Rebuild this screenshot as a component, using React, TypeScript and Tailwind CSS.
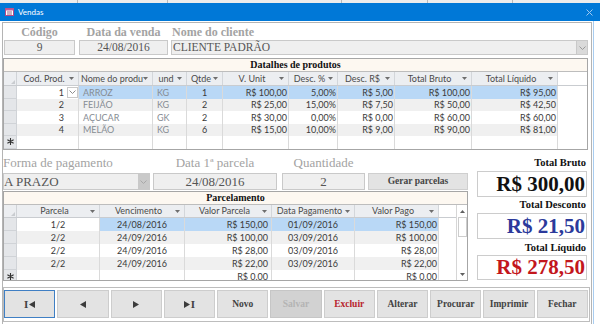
import React from "react";

const SERIF = "font-['Liberation_Serif','Times_New_Roman',serif]";
const SANS = "font-['Lato','Liberation_Sans',sans-serif]";

function HArrow() {
  return (
    <svg width="5" height="3" viewBox="0 0 5 3" className="shrink-0">
      <path d="M0 0H5L2.5 3Z" fill="#6e6e6e" />
    </svg>
  );
}

function Chevron({ color = "#8c8c8c" }: { color?: string }) {
  return (
    <svg width="7" height="4" viewBox="0 0 7 4">
      <path d="M0.5 0.5L3.5 3.5L6.5 0.5" fill="none" stroke={color} strokeWidth="1" />
    </svg>
  );
}

function Star() {
  return (
    <svg width="7" height="7" viewBox="0 0 7 7">
      <path d="M3.5 0V7M0.4 1.7L6.6 5.3M0.4 5.3L6.6 1.7" stroke="#333" strokeWidth="1.1" />
    </svg>
  );
}

function Tri({ dir }: { dir: "l" | "r" }) {
  return (
    <svg width="6" height="7" viewBox="0 0 6 7">
      {dir === "l" ? <path d="M6 0V7L0 3.5Z" fill="#3c3c3c" /> : <path d="M0 0V7L6 3.5Z" fill="#3c3c3c" />}
    </svg>
  );
}

type Col = { w: string; label: string; cls: string };

const cols1: Col[] = [
  { w: "w-[62px]", label: "Cod. Prod.", cls: "justify-end pr-[14px] text-[#3a3a3a]" },
  { w: "w-[74px]", label: "Nome do produ", cls: "justify-start pl-[4px] text-[#868c93]" },
  { w: "w-[34px]", label: "und", cls: "justify-start pl-[4px] text-[#868c93]" },
  { w: "w-[36px]", label: "Qtde", cls: "justify-center text-[#3a3a3a]" },
  { w: "w-[66px]", label: "V. Unit", cls: "justify-end pr-[1px] text-[#3a3a3a]" },
  { w: "w-[49px]", label: "Desc. %", cls: "justify-end pr-[1px] text-[#3a3a3a]" },
  { w: "w-[57px]", label: "Desc. R$", cls: "justify-end pr-[1px] text-[#3a3a3a]" },
  { w: "w-[77px]", label: "Total Bruto", cls: "justify-end pr-[1px] text-[#3a3a3a]" },
  { w: "w-[86px]", label: "Total Líquido", cls: "justify-end pr-[1px] text-[#3a3a3a]" },
];

const rows1 = [
  ["1", "ARROZ", "KG", "1", "R$ 100,00", "5,00%", "R$ 5,00", "R$ 100,00", "R$ 95,00"],
  ["2", "FEIJÃO", "KG", "2", "R$ 25,00", "15,00%", "R$ 7,50", "R$ 50,00", "R$ 42,50"],
  ["3", "AÇUCAR", "GK", "2", "R$ 30,00", "0,00%", "R$ 0,00", "R$ 60,00", "R$ 60,00"],
  ["4", "MELÃO", "KG", "6", "R$ 15,00", "10,00%", "R$ 9,00", "R$ 90,00", "R$ 81,00"],
];

const cols2: Col[] = [
  { w: "w-[83px]", label: "Parcela", cls: "justify-center text-[#3a3a3a]" },
  { w: "w-[85px]", label: "Vencimento", cls: "justify-center text-[#3a3a3a]" },
  { w: "w-[87px]", label: "Valor Parcela", cls: "justify-end pr-[3px] text-[#3a3a3a]" },
  { w: "w-[83px]", label: "Data Pagamento", cls: "justify-center text-[#3a3a3a]" },
  { w: "w-[84px]", label: "Valor Pago", cls: "justify-end pr-[1px] text-[#3a3a3a]" },
];

const rows2 = [
  ["1/2", "24/08/2016", "R$ 150,00", "01/09/2016", "R$ 150,00"],
  ["2/2", "24/09/2016", "R$ 100,00", "03/09/2016", "R$ 100,00"],
  ["2/2", "24/09/2016", "R$ 28,00", "03/09/2016", "R$ 28,00"],
  ["2/2", "24/09/2016", "R$ 22,00", "03/09/2016", "R$ 22,00"],
  ["", "", "R$ 0,00", "", "R$ 0,00"],
];

function Header({ cols, h }: { cols: Col[]; h: string }) {
  return (
    <div className={`${h} flex shrink-0 border-b border-[#c9ccd0] text-[9px] text-[#4a4a4a]`}>
      <div className="w-[13px] shrink-0 bg-[#eceef1] border-r border-[#d0d3d7] flex items-end justify-end p-[1px]">
        <svg width="4" height="4" viewBox="0 0 4 4">
          <path d="M4 0V4H0Z" fill="#c9ccd0" />
        </svg>
      </div>
      {cols.map((c, i) => (
        <div
          key={i}
          className={`${c.w} shrink-0 h-full bg-[#eceef1] border-r border-[#d3d6da] flex items-center pl-[2px] pr-[4px] overflow-hidden`}
        >
          <span className="flex-1 text-center whitespace-nowrap overflow-hidden">{c.label}</span>
          <HArrow />
        </div>
      ))}
      <div className="flex-1 bg-white" />
    </div>
  );
}

function Row({
  cols,
  vals,
  idx,
  h,
  isNew,
  first,
}: {
  cols: Col[];
  vals: string[];
  idx: number;
  h: string;
  isNew?: boolean;
  first?: React.ReactNode;
}) {
  const sel = idx === 0;
  const bg = isNew ? "bg-white" : sel ? "bg-[#b9d8f6]" : idx % 2 === 1 ? "bg-[#f0f0f0]" : "bg-white";
  return (
    <div className={`${h} flex shrink-0 text-[9px]`}>
      <div className="w-[13px] shrink-0 bg-[#e4e6e9] border-r border-b border-[#d0d3d7] flex items-center justify-center">
        {isNew && <Star />}
      </div>
      {cols.map((c, i) => {
        const cellBg = sel && i === 0 ? "bg-white" : bg;
        if (sel && i === 0 && first) {
          return (
            <div key={i} className={`${c.w} shrink-0 h-full ${cellBg} border-r border-[#dadada] flex items-center justify-end text-[#3a3a3a]`}>
              {first}
            </div>
          );
        }
        return (
          <div
            key={i}
            className={`${c.w} shrink-0 h-full ${cellBg} border-r border-[#dadada] flex items-center whitespace-nowrap overflow-hidden ${c.cls}`}
          >
            {vals[i]}
          </div>
        );
      })}
      <div className="flex-1 bg-white" />
    </div>
  );
}

function SubTitle({ text }: { text: string }) {
  return (
    <div className={`h-[13px] shrink-0 bg-[#fdf8f1] border-b border-[#bdbdbd] flex items-center justify-center ${SERIF} text-[10px] font-bold text-[#111] leading-[12px]`}>
      {text}
    </div>
  );
}

function Btn({ children, cls = "", text = "text-[#424242]" }: { children: React.ReactNode; cls?: string; text?: string }) {
  return (
    <div
      className={`flex-1 h-[28px] flex items-center justify-center border ${SERIF} text-[9.5px] font-bold ${text} ${cls}`}
    >
      {children}
    </div>
  );
}

export default function App() {
  return (
    <div className="w-[600px] h-[324px] overflow-hidden bg-white relative">
      {/* top strip */}
      <div className="h-[3px] bg-[#ececec] flex">
        <div className="w-[78px] border-r border-[#b8b8b8]" />
        <div className="w-[90px] border-r border-[#b8b8b8]" />
        <div className="w-[174px] border-r border-[#b8b8b8]" />
        <div className="w-[86px] border-r border-[#b8b8b8]" />
        <div className="w-[85px] border-r border-[#b8b8b8]" />
      </div>
      {/* title bar */}
      <div className="h-[18px] bg-[#0078d7] flex items-center pl-[5px] pr-[7px]">
        <svg width="9" height="8" viewBox="0 0 9 8">
          <rect x="0.5" y="0.5" width="8" height="7" fill="#fff" stroke="#b44a86" />
          <rect x="0.5" y="0.5" width="8" height="2" fill="#c85a96" />
          <path d="M2 4H7M2 6H7" stroke="#7a3b63" strokeWidth="0.8" />
        </svg>
        <span className={`ml-[4px] text-[8px] text-white ${SANS}`}>Vendas</span>
        <svg className="ml-auto" width="7" height="7" viewBox="0 0 7 7">
          <path d="M0.5 0.5L6.5 6.5M6.5 0.5L0.5 6.5" stroke="#9cc8f1" strokeWidth="1" />
        </svg>
      </div>
      {/* body */}
      <div className="h-[303px] flex">
        <div className="w-[2px]" />
        <div className="w-[590px] h-[302px] mt-[1px] border-l border-t border-r border-[#b4b4b4] flex flex-col">
          {/* labels row */}
          <div className={`mt-[2px] h-[15px] flex ${SERIF} text-[12px] font-bold text-[#a3a3a3] leading-[15px]`}>
            <div className="ml-[1px] w-[71px] text-center">Código</div>
            <div className="ml-[4px] w-[89px] text-center">Data da venda</div>
            <div className="ml-[3px] pl-[1px]">Nome do cliente</div>
          </div>
          {/* inputs row */}
          <div className={`h-[15px] flex ${SERIF} text-[11.5px] text-[#555] leading-[13px]`}>
            <div className="ml-[1px] w-[71px] border border-[#c9c9c9] bg-[#efefef] flex items-center justify-center">9</div>
            <div className="ml-[4px] w-[89px] border border-[#c9c9c9] bg-[#efefef] flex items-center justify-center">24/08/2016</div>
            <div className="ml-[3px] w-[417px] border border-[#c9c9c9] bg-[#efefef] flex items-center">
              <span className="pl-[1px] flex-1">CLIENTE PADRÃO</span>
              <div className="w-[11px] h-full bg-[#dadada] border-l border-[#c9c9c9] flex items-center justify-center">
                <Chevron color="#9a9a9a" />
              </div>
            </div>
          </div>
          {/* subform 1 */}
          <div className={`mt-[3px] h-[92px] w-[585px] border border-[#a6a6a6] flex flex-col overflow-hidden ${SANS}`}>
            <SubTitle text="Datalhes de produtos" />
            <Header cols={cols1} h="h-[14px]" />
            {rows1.map((r, i) => (
              <Row
                key={i}
                cols={cols1}
                vals={r}
                idx={i}
                h="h-[12.5px]"
                first={
                  <>
                    <span>1</span>
                    <span className="ml-[3px] w-[11px] h-[11px] border border-[#c9c9c9] bg-white flex items-center justify-center">
                      <Chevron />
                    </span>
                  </>
                }
              />
            ))}
            <Row cols={cols1} vals={["", "", "", "", "", "", "", "", ""]} idx={4} h="h-[12.5px]" isNew />
          </div>
          {/* section 2 */}
          <div className="flex">
            <div className="w-[465px] flex flex-col">
              <div className={`mt-[4px] h-[17px] flex ${SERIF} text-[13px] text-[#a3a3a3] leading-[17px] whitespace-nowrap`}>
                <div className="w-[147px]">Forma de pagamento</div>
                <div className="ml-[3px] w-[124px] text-center">Data 1ª parcela</div>
                <div className="ml-[5px] w-[83px] text-center">Quantidade</div>
              </div>
              <div className={`mt-[2px] h-[17px] flex ${SERIF} text-[13px] text-[#555] leading-[15px]`}>
                <div className="w-[147px] border border-[#c9c9c9] bg-[#efefef] flex items-center">
                  <span className="flex-1">A PRAZO</span>
                  <div className="w-[11px] h-full bg-[#c9c9c9] flex items-center justify-center">
                    <Chevron color="#a8a8a8" />
                  </div>
                </div>
                <div className="ml-[3px] w-[124px] border border-[#c9c9c9] bg-[#efefef] flex items-center justify-center">24/08/2016</div>
                <div className="ml-[5px] w-[83px] border border-[#c9c9c9] bg-[#efefef] flex items-center justify-center">2</div>
                <div className="ml-[3px] w-[100px] border border-[#cfcfcf] bg-[#e3e3e3] flex items-center justify-center text-[9.5px] font-bold text-[#454545]">
                  Gerar parcelas
                </div>
              </div>
              {/* subform 2 */}
              <div className={`mt-[1px] h-[90px] w-[465px] border border-[#a6a6a6] flex flex-col overflow-hidden ${SANS}`}>
                <SubTitle text="Parcelamento" />
                <div className="flex flex-1 overflow-hidden">
                  <div className="flex-1 flex flex-col overflow-hidden">
                    <Header cols={cols2} h="h-[13px]" />
                    {rows2.map((r, i) => (
                      <Row key={i} cols={cols2} vals={r} idx={i} h="h-[13px]" isNew={i === 4} />
                    ))}
                  </div>
                  <div className="w-[11px] shrink-0 border-l border-[#d6d6d6] bg-white flex flex-col items-center">
                    <div className="h-[12px] w-full flex items-center justify-center">
                      <svg width="5" height="3" viewBox="0 0 5 3">
                        <path d="M0 3H5L2.5 0Z" fill="#606060" />
                      </svg>
                    </div>
                    <div className="h-[20px] w-[9px] border border-[#cdcdcd] bg-white" />
                    <div className="flex-1" />
                    <div className="h-[12px] w-full flex items-center justify-center">
                      <svg width="5" height="3" viewBox="0 0 5 3">
                        <path d="M0 0H5L2.5 3Z" fill="#606060" />
                      </svg>
                    </div>
                  </div>
                </div>
              </div>
            </div>
            {/* totals */}
            <div className={`ml-[9px] w-[110px] mt-[7px] flex flex-col ${SERIF}`}>
              <div className="h-[12px] text-right pr-[1px] text-[10.5px] font-bold leading-[12px] text-[#111]">Total Bruto</div>
              <div className="mt-[2px] h-[26px] border border-[#cccccc] bg-white text-right pr-[1px] text-[21px] font-bold leading-[24px] text-[#111]">
                R$ 300,00
              </div>
              <div className="mt-[2px] h-[12px] text-right pr-[1px] text-[10.5px] font-bold leading-[12px] text-[#111]">Total Desconto</div>
              <div className="mt-[2px] h-[26px] border border-[#cccccc] bg-white text-right pr-[1px] text-[21px] font-bold leading-[24px] text-[#2b3a9b]">
                R$ 21,50
              </div>
              <div className="mt-[3px] h-[12px] text-right pr-[1px] text-[10.5px] font-bold leading-[12px] text-[#111]">Total Líquido</div>
              <div className="mt-[1px] h-[25px] border border-[#cccccc] bg-white text-right pr-[1px] text-[21px] font-bold leading-[23px] text-[#c3161c]">
                R$ 278,50
              </div>
            </div>
          </div>
          {/* button bar */}
          <div className="mt-[6px] h-[35px] w-[587px] border border-[#bdbdbd] flex items-start pt-[2px] pr-[1px] gap-[2px]">
            <Btn cls="bg-[#e3e3e3] border-[#3f7fc4]">
              <span className="flex items-center gap-[1px]">
                <span className="text-[11px] leading-[10px]">I</span>
                <Tri dir="l" />
              </span>
            </Btn>
            <Btn cls="bg-[#e3e3e3] border-[#cdcdcd]">
              <Tri dir="l" />
            </Btn>
            <Btn cls="bg-[#e3e3e3] border-[#cdcdcd]">
              <Tri dir="r" />
            </Btn>
            <Btn cls="bg-[#e3e3e3] border-[#cdcdcd]">
              <span className="flex items-center gap-[1px]">
                <Tri dir="r" />
                <span className="text-[11px] leading-[10px]">I</span>
              </span>
            </Btn>
            <Btn cls="bg-[#e3e3e3] border-[#cdcdcd]">Novo</Btn>
            <Btn cls="bg-[#d2d2d2] border-[#c6c6c6]" text="text-[#b4b4b4]">
              Salvar
            </Btn>
            <Btn cls="bg-[#e3e3e3] border-[#cdcdcd]" text="text-[#b8262e]">
              Excluir
            </Btn>
            <Btn cls="bg-[#e3e3e3] border-[#cdcdcd]">Alterar</Btn>
            <Btn cls="bg-[#e3e3e3] border-[#cdcdcd]">Procurar</Btn>
            <Btn cls="bg-[#e3e3e3] border-[#cdcdcd]">Imprimir</Btn>
            <Btn cls="bg-[#e3e3e3] border-[#cdcdcd]">Fechar</Btn>
          </div>
        </div>
        <div className="w-[1px]" />
        <div className="w-[1px] bg-[#a9cdf0]" />
      </div>
    </div>
  );
}
